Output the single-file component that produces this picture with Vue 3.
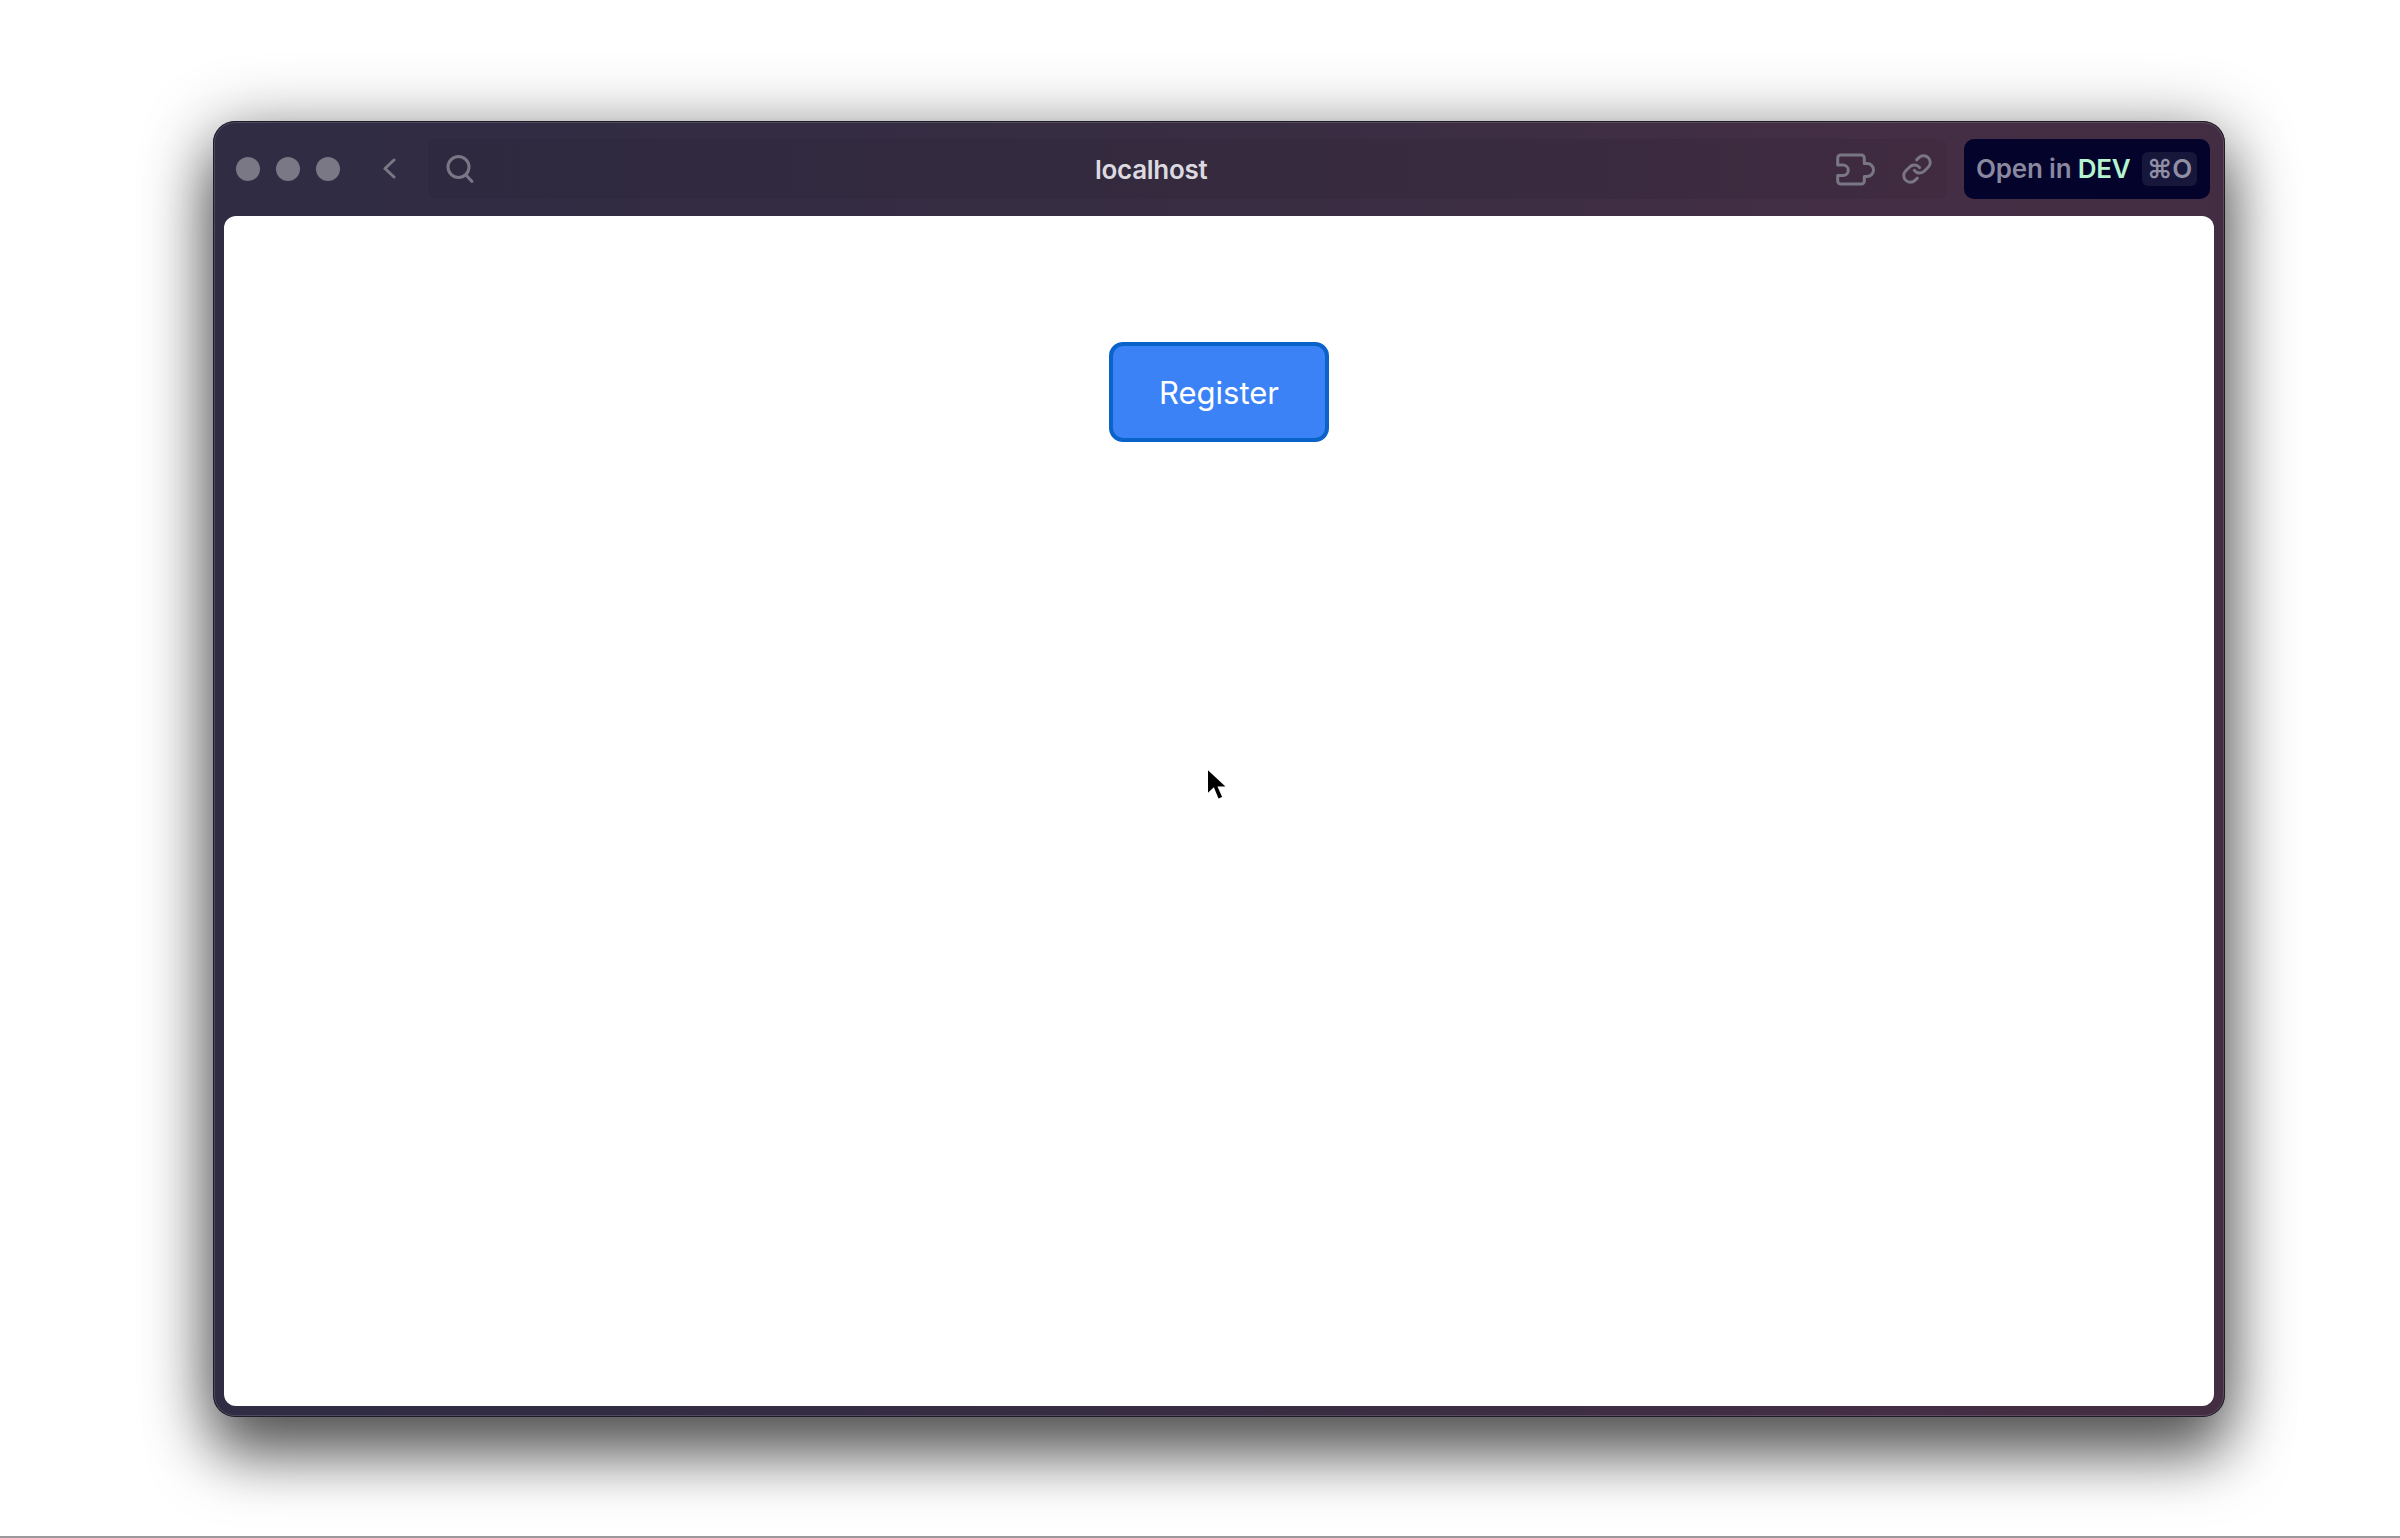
<script setup>
const dots = [1, 2, 3]
</script>

<template>
  <div class="page">
    <div class="window">
      <div class="titlebar">
        <div class="dots">
          <span v-for="d in dots" :key="d" class="dot"></span>
        </div>
        <svg class="back" width="14" height="22" viewBox="0 0 14 22" fill="none">
          <path d="M12 2 L3 10.5 L12 19" stroke="#7a7785" stroke-width="3" stroke-linecap="round" stroke-linejoin="round" />
        </svg>
        <div class="address-bar">
          <svg width="30" height="30" viewBox="0 0 30 30" fill="none">
            <circle cx="13.5" cy="13" r="10.5" stroke="#7a7785" stroke-width="3" />
            <path d="M21 21 L27 27.5" stroke="#7a7785" stroke-width="3" stroke-linecap="round" />
          </svg>
          <div class="title">localhost</div>
          <div class="tools">
            <svg width="42" height="35" viewBox="0 0 42 35" fill="none">
              <path d="M5.7 3 H26.3 a3 3 0 0 1 3 3 V11.5 H32 a6.5 6.5 0 0 1 0 13 H29.3 V29 a3 3 0 0 1 -3 3 H5.7 a3 3 0 0 1 -3 -3 V23.5 H8 a5.2 5.2 0 0 0 0 -10.5 H2.7 V6 a3 3 0 0 1 3 -3 Z" stroke="#7a7785" stroke-width="3" stroke-linejoin="round" />
            </svg>
            <svg width="32" height="32" viewBox="0 0 24 24" fill="none" stroke="#7a7785" stroke-width="2.2" stroke-linecap="round" stroke-linejoin="round">
              <path d="M10 13a5 5 0 0 0 7.54.54l3-3a5 5 0 0 0-7.07-7.07l-1.72 1.71" />
              <path d="M14 11a5 5 0 0 0-7.54-.54l-3 3a5 5 0 0 0 7.07 7.07l1.71-1.71" />
            </svg>
          </div>
        </div>
        <div class="open-btn">
          <span>Open in <b>DEV</b></span>
          <span class="kbd">⌘O</span>
        </div>
      </div>
      <div class="content">
        <button class="register">Register</button>
      </div>
    </div>
    <svg class="cursor" width="26" height="38" viewBox="0 0 26 38">
      <path d="M3 2 V29 L9.5 23 L14 34 L19.5 31.5 L15 21.5 H24 Z" fill="#000" stroke="#fff" stroke-width="2" />
    </svg>
  </div>
</template>

<style>
html, body {
  margin: 0;
  background: #fff;
}
</style>

<style scoped>
.page {
  position: relative;
  height: 1415px;
  padding: 121px 0 0 213px;
  border-bottom: 2px solid #9a9a9a;
  overflow: hidden;
  font-family: Inter, "Liberation Sans", sans-serif;
}

.window {
  width: 2012px;
  height: 1296px;
  box-sizing: border-box;
  padding: 0 11px 11px 11px;
  border-radius: 22px;
  display: flex;
  flex-direction: column;
  background: linear-gradient(90deg, #2f2c44, #382d42 50%, #442e45 85%, #432d42);
  box-shadow: inset 0 0 0 1px #1d1b26, inset 0 0 0 2px rgba(255, 255, 255, 0.14), 0 40px 60px rgba(0, 0, 0, 0.5), 0 10px 70px rgba(0, 0, 0, 0.45);
}

.titlebar {
  height: 95px;
  flex-shrink: 0;
  display: flex;
  align-items: center;
  padding-top: 1px;
  box-sizing: border-box;
}

.dots {
  display: flex;
  gap: 16px;
  margin-left: 12px;
}

.dot {
  width: 24px;
  height: 24px;
  border-radius: 50%;
  background: #7b7886;
}

.back {
  margin-left: 42px;
}

.address-bar {
  margin-left: 32px;
  flex: 1;
  height: 60px;
  display: flex;
  align-items: center;
  padding: 0 14px 0 17px;
  background: rgba(0, 0, 0, 0.05);
  border-radius: 8px;
}

.title {
  margin-left: 620px;
  font-size: 26px;
  font-weight: 600;
  letter-spacing: -0.3px;
  color: #dcdae0;
}

.tools {
  margin-left: auto;
  display: flex;
  align-items: center;
  gap: 24px;
}

.open-btn {
  margin-left: 17px;
  margin-right: 4px;
  margin-top: -1px;
  width: 246px;
  height: 60px;
  box-sizing: border-box;
  padding: 0 13px 0 12px;
  display: flex;
  align-items: center;
  justify-content: space-between;
  border-radius: 10px;
  background: #04032c;
  color: #8a889e;
  font-size: 26px;
  font-weight: 600;
  letter-spacing: -0.2px;
}

.open-btn b {
  color: #b4f5cf;
  font-weight: 600;
}

.kbd {
  width: 55px;
  height: 34px;
  line-height: 34px;
  text-align: center;
  border-radius: 6px;
  background: #17163b;
  color: #918fa3;
  font-size: 26px;
}

.content {
  flex: 1;
  background: #fff;
  border-radius: 12px;
  display: flex;
  justify-content: center;
  align-items: flex-start;
  padding-top: 126px;
}

.register {
  width: 220px;
  height: 100px;
  border: 4px solid #0a63c9;
  border-radius: 14px;
  background: #3b82f6;
  color: #fff;
  font-family: inherit;
  font-size: 31px;
}

.cursor {
  position: absolute;
  left: 1204px;
  top: 766px;
}
</style>
